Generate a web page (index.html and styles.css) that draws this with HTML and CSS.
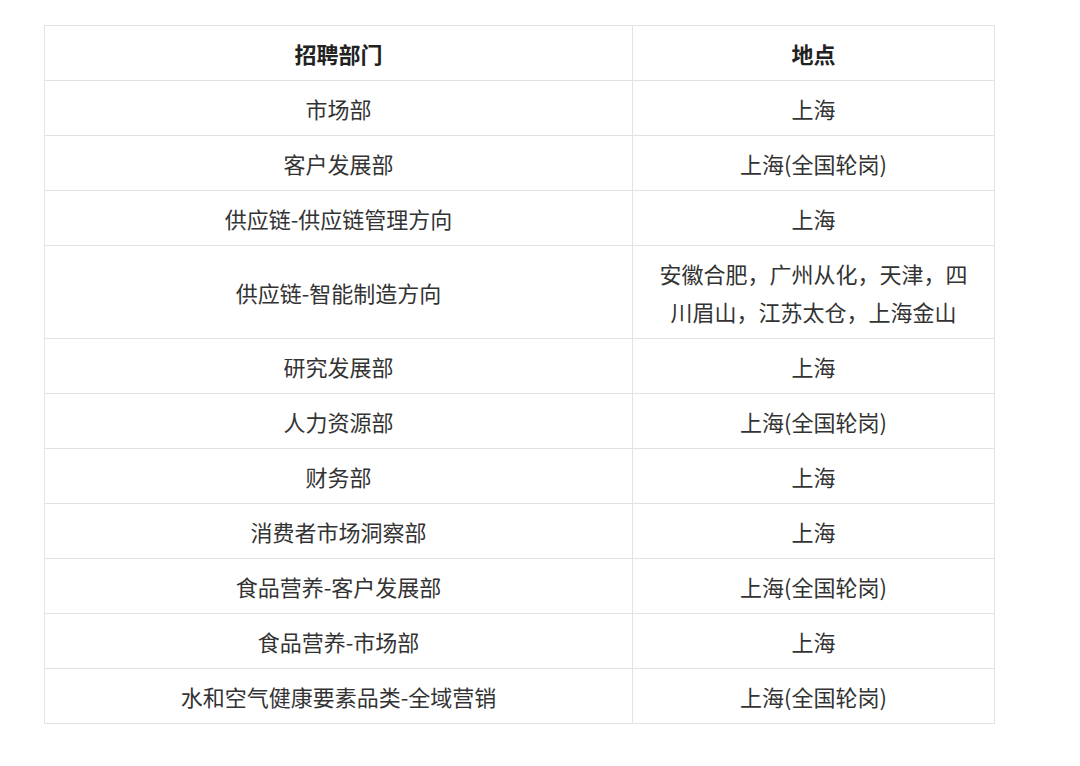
FILE: index.html
```html
<!DOCTYPE html>
<html lang="zh">
<head>
<meta charset="utf-8">
<link rel="stylesheet" href="styles.css">
</head>
<body>
<table class="jobs">
  <colgroup><col class="c1"><col class="c2"></colgroup>
  <thead>
    <tr><th>招聘部门</th><th>地点</th></tr>
  </thead>
  <tbody>
    <tr><td>市场部</td><td>上海</td></tr>
    <tr><td>客户发展部</td><td>上海(全国轮岗)</td></tr>
    <tr><td>供应链-供应链管理方向</td><td>上海</td></tr>
    <tr><td>供应链-智能制造方向</td><td>安徽合肥，广州从化，天津，四川眉山，江苏太仓，上海金山</td></tr>
    <tr><td>研究发展部</td><td>上海</td></tr>
    <tr><td>人力资源部</td><td>上海(全国轮岗)</td></tr>
    <tr><td>财务部</td><td>上海</td></tr>
    <tr><td>消费者市场洞察部</td><td>上海</td></tr>
    <tr><td>食品营养-客户发展部</td><td>上海(全国轮岗)</td></tr>
    <tr><td>食品营养-市场部</td><td>上海</td></tr>
    <tr><td>水和空气健康要素品类-全域营销</td><td>上海(全国轮岗)</td></tr>
  </tbody>
</table>
</body>
</html>
```
FILE: styles.css
```css
html, body {
  margin: 0;
  padding: 0;
  background: #fff;
}
body {
  padding: 25px 0 0 44px;
  font-family: "Noto Sans CJK SC", "Noto Sans", sans-serif;
  color: #333;
}
.jobs {
  border-collapse: collapse;
  table-layout: fixed;
  width: 950px;
  font-size: 22px;
  line-height: 38px;
}
.jobs .c1 { width: 588px; }
.jobs .c2 { width: 362px; }
.jobs th,
.jobs td {
  border: 1px solid #e3e3e3;
  padding: 8px 22px;
  text-align: center;
  vertical-align: middle;
  font-weight: normal;
}
.jobs th {
  font-weight: bold;
  color: #222;
}
```
